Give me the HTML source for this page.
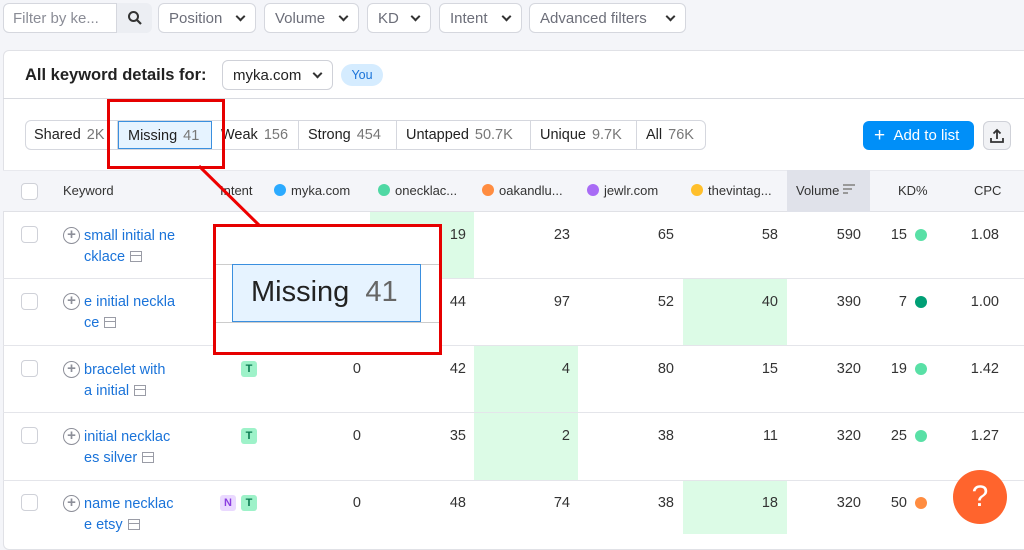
<!DOCTYPE html>
<html><head><meta charset="utf-8"><style>
*{box-sizing:border-box;margin:0;padding:0}
body{width:1024px;height:534px;overflow:hidden;background:#f4f5f9;font-family:"Liberation Sans",sans-serif;color:#333;position:relative}
.a{position:absolute}
.f{position:absolute;top:3px;height:30px;border:1px solid #d5d7de;border-radius:6px;background:#fff;font-size:15px;color:#6c6e79;line-height:30px;padding-left:10px}
.chev{position:absolute;right:11px;top:9px;width:7px;height:7px;border-right:2px solid #333;border-bottom:2px solid #333;transform:rotate(45deg)}
.card{position:absolute;left:3px;top:50px;width:1030px;height:500px;background:#fff;border:1px solid #e0e1e6;border-radius:6px}
.tab{position:absolute;top:121px;height:28px;line-height:28px;font-size:14.5px;color:#222;padding-left:9px;border-right:1px solid #d5d7de}
.tab span{color:#777;margin-left:6px}
.th{position:absolute;top:170px;height:42px;line-height:42px;font-size:13px;color:#333}
.dot{display:inline-block;width:12px;height:12px;border-radius:50%;vertical-align:-1px;margin-right:5px}
.row{position:absolute;left:3px;width:1024px;border-top:1px solid #e4e5ea}
.cb{position:absolute;left:21px;width:17px;height:17px;border:1px solid #cfd1d8;border-radius:4px;background:#fff}
.kw{position:absolute;left:84px;width:100px;font-size:14.5px;color:#1a73d9;line-height:20.5px}
.plus{position:absolute;left:63px;width:17px;height:17px;border:1.6px solid #8d8f99;border-radius:50%;color:#8d8f99;font-size:15px;line-height:13px;text-align:center;font-weight:bold}
.sv{display:inline-block;width:12px;height:11px;border:1.6px solid #9a9ca6;vertical-align:-1px;margin-left:5px;position:relative}
.sv:after{content:"";position:absolute;left:0;right:0;top:3px;border-top:1.4px solid #9a9ca6}
.n{position:absolute;font-size:14.5px;color:#333;text-align:right;width:60px}
.g{position:absolute;background:#dcfbe6}
.bd{position:absolute;width:16px;height:16px;border-radius:3px;font-size:11px;font-weight:bold;text-align:center;line-height:16px}
.T{background:#9ef2c9;color:#0a7a50}.N{background:#ead9ff;color:#8a3ee0}
.kd{position:absolute;width:12px;height:12px;border-radius:50%;left:915px}
</style></head><body>
<div class="f" style="left:3px;width:148px;padding-left:9px;color:#8a8c96">Filter by ke...<div class="a" style="left:112px;top:-1px;width:36px;height:30px;background:#eceef3;border-left:1px solid #d5d7de;border-radius:0 6px 6px 0">
<svg class="a" style="left:10px;top:7px" width="16" height="16" viewBox="0 0 16 16"><circle cx="6.5" cy="6.5" r="4.5" fill="none" stroke="#333" stroke-width="2"/><path d="M10 10l4 4" stroke="#333" stroke-width="2.2"/></svg></div></div>
<div class="f" style="left:158px;width:98px">Position<i class="chev"></i></div>
<div class="f" style="left:264px;width:95px">Volume<i class="chev"></i></div>
<div class="f" style="left:367px;width:64px">KD<i class="chev"></i></div>
<div class="f" style="left:439px;width:83px">Intent<i class="chev"></i></div>
<div class="f" style="left:529px;width:157px">Advanced filters<i class="chev"></i></div>

<div class="card"></div>
<div class="a" style="left:25px;top:66px;font-size:16.5px;font-weight:bold;color:#222">All keyword details for:</div>
<div class="f" style="left:222px;top:60px;width:111px;height:30px;color:#222;border-color:#cfd1d8">myka.com<i class="chev"></i></div>
<div class="a" style="left:341px;top:64px;width:42px;height:22px;border-radius:11px;background:#d5ecff;color:#1a73d9;font-size:12.5px;text-align:center;line-height:22px">You</div>
<div class="a" style="left:3px;top:98px;width:1024px;border-top:1px solid #d8dae0"></div>

<div class="a" style="left:25px;top:120px;width:681px;height:30px;border:1px solid #d5d7de;border-radius:6px"></div>
<div class="tab" style="left:25px;width:93px">Shared<span>2K</span></div>
<div class="tab" style="left:118px;width:94px;background:#e6f3ff;border:1px solid #3a8fdf">Missing<span>41</span></div>
<div class="tab" style="left:212px;width:87px">Weak<span>156</span></div>
<div class="tab" style="left:299px;width:98px">Strong<span>454</span></div>
<div class="tab" style="left:397px;width:134px">Untapped<span>50.7K</span></div>
<div class="tab" style="left:531px;width:106px">Unique<span>9.7K</span></div>
<div class="tab" style="left:637px;width:68px;border:none">All<span>76K</span></div>

<div class="a" style="left:863px;top:121px;width:111px;height:29px;background:#008ff8;border-radius:6px;color:#fff;font-size:15px;line-height:29px;padding-left:11px"><b style="font-size:19px;font-weight:normal;vertical-align:-1px">+</b>&nbsp;&nbsp;Add to list</div>
<div class="a" style="left:983px;top:121px;width:28px;height:29px;background:#f1f2f5;border:1px solid #cfd1d8;border-radius:6px">
<svg class="a" style="left:5px;top:6px" width="16" height="16" viewBox="0 0 16 16"><path d="M8 11V2M4.5 5.5L8 2l3.5 3.5M2 10v4h12v-4" fill="none" stroke="#333" stroke-width="1.8"/></svg></div>

<div class="a" style="left:3px;top:170px;width:1024px;height:42px;background:#f4f5f9;border-top:1px solid #e8e9ee;border-bottom:1px solid #e0e1e6"></div>
<div class="a" style="left:787px;top:170px;width:83px;height:42px;background:#e0e2ea"></div>
<div class="cb" style="top:183px"></div>
<div class="th" style="left:63px">Keyword</div>
<div class="th" style="left:220px">Intent</div>
<div class="th" style="left:274px"><i class="dot" style="background:#2baaff"></i>myka.com</div>
<div class="th" style="left:378px"><i class="dot" style="background:#4fd8a4"></i>onecklac...</div>
<div class="th" style="left:482px"><i class="dot" style="background:#ff8c40"></i>oakandlu...</div>
<div class="th" style="left:587px"><i class="dot" style="background:#a86bf5"></i>jewlr.com</div>
<div class="th" style="left:691px"><i class="dot" style="background:#ffbf2b"></i>thevintag...</div>
<div class="th" style="left:796px">Volume <span style="display:inline-block;width:12px;vertical-align:1px"><i style="display:block;border-top:2px solid #999;width:12px;margin-bottom:2px"></i><i style="display:block;border-top:2px solid #999;width:9px;margin-bottom:2px"></i><i style="display:block;border-top:2px solid #999;width:5px"></i></span></div>
<div class="th" style="left:898px">KD%</div>
<div class="th" style="left:974px">CPC</div>

<div class="g" style="left:370px;top:212px;width:104px;height:66px"></div>
<div class="g" style="left:683px;top:279px;width:104px;height:67px"></div>
<div class="g" style="left:474px;top:346px;width:104px;height:134px"></div>
<div class="g" style="left:683px;top:480px;width:104px;height:54px"></div>

<div class="row" style="top:278px"></div><div class="row" style="top:345px"></div><div class="row" style="top:412px"></div><div class="row" style="top:480px"></div>

<div class="cb" style="top:226px"></div><div class="plus" style="top:227px">+</div><div class="kw" style="top:226px">small initial ne cklace<i class="sv"></i></div>
<div class="cb" style="top:293px"></div><div class="plus" style="top:293px">+</div><div class="kw" style="top:292px">e initial neckla ce<i class="sv"></i></div>
<div class="cb" style="top:360px"></div><div class="plus" style="top:361px">+</div><div class="kw" style="top:360px;width:92px">bracelet with a initial<i class="sv"></i></div>
<div class="cb" style="top:427px"></div><div class="plus" style="top:428px">+</div><div class="kw" style="top:427px;width:95px">initial necklac es silver<i class="sv"></i></div>
<div class="cb" style="top:494px"></div><div class="plus" style="top:495px">+</div><div class="kw" style="top:494px;width:95px">name necklac e etsy<i class="sv"></i></div>

<div class="bd T" style="left:241px;top:361px">T</div>
<div class="bd T" style="left:241px;top:428px">T</div>
<div class="bd N" style="left:220px;top:495px">N</div><div class="bd T" style="left:241px;top:495px">T</div>

<div class="n" style="left:301px;top:361px">0</div><div class="n" style="left:301px;top:428px">0</div><div class="n" style="left:301px;top:495px">0</div>
<div class="n" style="left:406px;top:227px">19</div><div class="n" style="left:406px;top:294px">44</div><div class="n" style="left:406px;top:361px">42</div><div class="n" style="left:406px;top:428px">35</div><div class="n" style="left:406px;top:495px">48</div>
<div class="n" style="left:510px;top:227px">23</div><div class="n" style="left:510px;top:294px">97</div><div class="n" style="left:510px;top:361px">4</div><div class="n" style="left:510px;top:428px">2</div><div class="n" style="left:510px;top:495px">74</div>
<div class="n" style="left:614px;top:227px">65</div><div class="n" style="left:614px;top:294px">52</div><div class="n" style="left:614px;top:361px">80</div><div class="n" style="left:614px;top:428px">38</div><div class="n" style="left:614px;top:495px">38</div>
<div class="n" style="left:718px;top:227px">58</div><div class="n" style="left:718px;top:294px">40</div><div class="n" style="left:718px;top:361px">15</div><div class="n" style="left:718px;top:428px">11</div><div class="n" style="left:718px;top:495px">18</div>
<div class="n" style="left:801px;top:227px">590</div><div class="n" style="left:801px;top:294px">390</div><div class="n" style="left:801px;top:361px">320</div><div class="n" style="left:801px;top:428px">320</div><div class="n" style="left:801px;top:495px">320</div>
<div class="n" style="left:847px;top:227px">15</div><div class="n" style="left:847px;top:294px">7</div><div class="n" style="left:847px;top:361px">19</div><div class="n" style="left:847px;top:428px">25</div><div class="n" style="left:847px;top:495px">50</div>
<div class="kd" style="top:229px;background:#59e0a6"></div><div class="kd" style="top:296px;background:#009f75"></div><div class="kd" style="top:363px;background:#59e0a6"></div><div class="kd" style="top:430px;background:#59e0a6"></div><div class="kd" style="top:497px;background:#ff8c40"></div>
<div class="n" style="left:939px;top:227px">1.08</div><div class="n" style="left:939px;top:294px">1.00</div><div class="n" style="left:939px;top:361px">1.42</div><div class="n" style="left:939px;top:428px">1.27</div>

<div class="a" style="left:953px;top:470px;width:54px;height:54px;border-radius:50%;background:#ff642d;color:#fff;font-size:30px;text-align:center;line-height:54px">?</div>

<svg class="a" style="left:0;top:0" width="1024" height="534"><path d="M199 166L262 228" stroke="#e00" stroke-width="3"/></svg>
<div class="a" style="left:107px;top:99px;width:118px;height:70px;border:3px solid #e60000"></div>
<div class="a" style="left:213px;top:224px;width:229px;height:131px;border:3px solid #e60000;background:#fff;overflow:hidden">
<div class="a" style="left:0;top:37px;width:230px;border-top:1px solid #ccc"></div>
<div class="a" style="left:0;top:95px;width:230px;border-top:1px solid #ccc"></div>
<div class="a" style="left:16px;top:37px;width:189px;height:58px;background:#e6f3ff;border:1.5px solid #3a8fdf;font-size:29px;line-height:55px;padding-left:18px;color:#222">Missing<span style="color:#666;margin-left:16px">41</span></div>
</div>
</body></html>
